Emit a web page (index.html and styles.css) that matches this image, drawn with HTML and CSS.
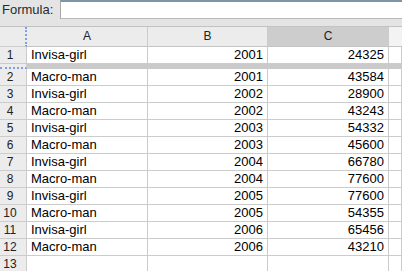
FILE: index.html
```html
<!DOCTYPE html>
<html>
<head>
<meta charset="utf-8">
<link rel="stylesheet" href="styles.css">
</head>
<body>
<div class="toolbar">
  <span class="label">Formula:</span>
  <div class="input"></div>
</div>
<div class="sheet">
  <div class="rh corner"></div>
  <div class="ch">A</div>
  <div class="ch">B</div>
  <div class="ch sel">C</div>
  <div class="ch rest"></div>

  <div class="rh">1</div>
  <div class="c">Invisa-girl</div>
  <div class="c n">2001</div>
  <div class="c n">24325</div>
  <div class="c"></div>

  <div class="rh freeze-rh"></div>
  <div class="freeze"></div>

  <div class="rh">2</div><div class="c">Macro-man</div><div class="c n">2001</div><div class="c n">43584</div><div class="c"></div>
  <div class="rh">3</div><div class="c">Invisa-girl</div><div class="c n">2002</div><div class="c n">28900</div><div class="c"></div>
  <div class="rh">4</div><div class="c">Macro-man</div><div class="c n">2002</div><div class="c n">43243</div><div class="c"></div>
  <div class="rh">5</div><div class="c">Invisa-girl</div><div class="c n">2003</div><div class="c n">54332</div><div class="c"></div>
  <div class="rh">6</div><div class="c">Macro-man</div><div class="c n">2003</div><div class="c n">45600</div><div class="c"></div>
  <div class="rh">7</div><div class="c">Invisa-girl</div><div class="c n">2004</div><div class="c n">66780</div><div class="c"></div>
  <div class="rh">8</div><div class="c">Macro-man</div><div class="c n">2004</div><div class="c n">77600</div><div class="c"></div>
  <div class="rh">9</div><div class="c">Invisa-girl</div><div class="c n">2005</div><div class="c n">77600</div><div class="c"></div>
  <div class="rh">10</div><div class="c">Macro-man</div><div class="c n">2005</div><div class="c n">54355</div><div class="c"></div>
  <div class="rh">11</div><div class="c">Invisa-girl</div><div class="c n">2006</div><div class="c n">65456</div><div class="c"></div>
  <div class="rh">12</div><div class="c">Macro-man</div><div class="c n">2006</div><div class="c n">43210</div><div class="c"></div>
  <div class="rh">13</div><div class="c"></div><div class="c"></div><div class="c"></div><div class="c"></div>
</div>
</body>
</html>
```

FILE: styles.css
```css
html, body {
  margin: 0;
  padding: 0;
  background: #ffffff;
  overflow: hidden;
}
body {
  font-family: "Liberation Sans", Arial, sans-serif;
  width: 402px;
  height: 271px;
}
.toolbar {
  height: 27px;
  box-sizing: border-box;
  display: flex;
  align-items: flex-start;
  background: #e4e4e4;
  border-bottom: 1px solid #c2c2c2;
}
.label {
  font-size: 13px;
  line-height: 20px;
  color: #2a2a2a;
  padding-left: 2px;
}
.input {
  flex: 1;
  height: 19px;
  box-sizing: border-box;
  margin-left: 7px;
  background: #ffffff;
  border-top: 2px solid #7e94a7;
  border-left: 1px solid #a8a8a8;
  border-bottom: 1px solid #b8b8b8;
}
.sheet {
  display: grid;
  grid-template-columns: 27px 121px 120px 121px 1fr;
  grid-template-rows: 20px 17px 5px repeat(12, 17px);
}
.sheet > div {
  box-sizing: border-box;
  border-right: 1px solid #cccccc;
  border-bottom: 1px solid #cccccc;
  overflow: hidden;
  white-space: nowrap;
}
.rh {
  background: #ececec;
  color: #222222;
  font-size: 12px;
  line-height: 16px;
  text-align: center;
  padding-right: 6px;
}
.corner {
  border-right: 2px dotted #7f9fe4 !important;
}
.ch {
  background: #ececec;
  color: #222222;
  font-size: 12px;
  line-height: 19px;
  text-align: center;
  border-bottom-color: #c4c4c4 !important;
}
.ch.sel {
  background: #cdcdcd;
}
.ch.rest {
  background: #f3f3f3;
  border-right: none !important;
}
.c {
  font-size: 13px;
  line-height: 16px;
  color: #000000;
  padding: 0 4px;
}
.c.n {
  text-align: right;
}
.freeze-rh {
  border-bottom: 2px dotted #7f9fe4 !important;
  background: #ececec;
}
.freeze {
  grid-column: 2 / -1;
  background: #cacaca;
  border: none !important;
}
```
